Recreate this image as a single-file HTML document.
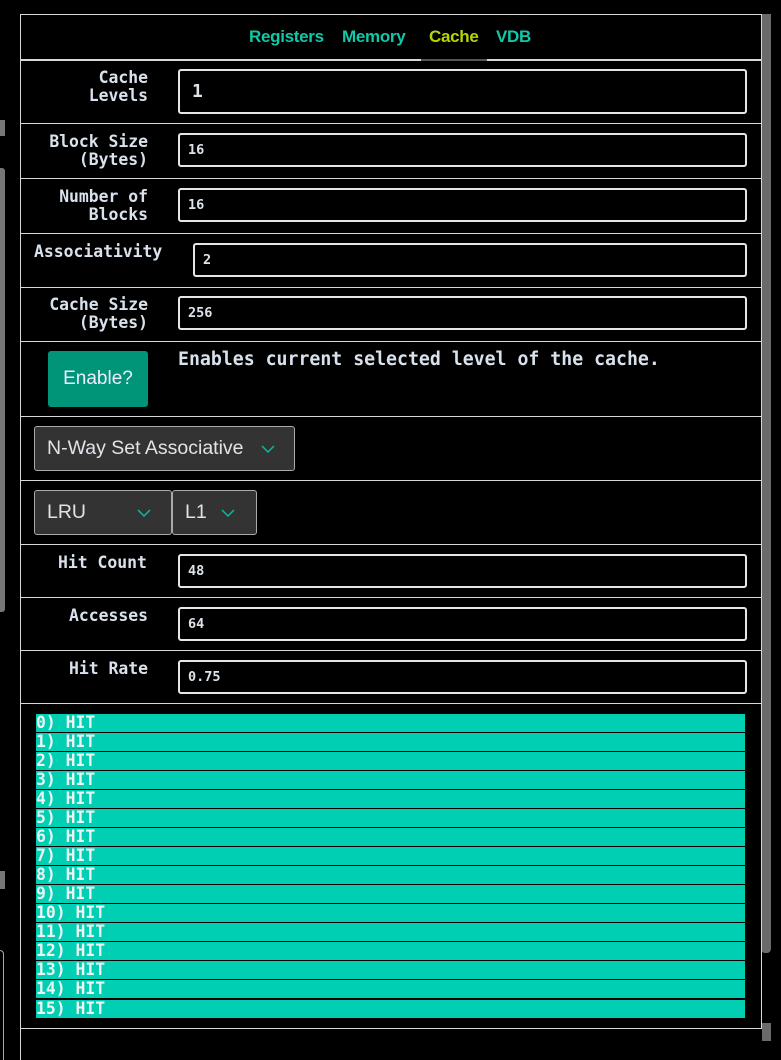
<!DOCTYPE html>
<html style="overflow:hidden"><head><meta charset="utf-8"><style>
*{box-sizing:border-box;margin:0;padding:0}
html,body{width:781px;height:1060px;overflow:hidden}
body{background:#000;position:relative;font-family:"DejaVu Sans Mono","Liberation Mono",monospace;color:#dde3ea}
.a{position:absolute}
.hl{position:absolute;left:21px;width:740px;height:1px;background:#d8d8d8}
.lab{position:absolute;font-weight:bold;font-size:16.4px;line-height:18px;text-align:right;color:#d9e2ec;white-space:nowrap}
.inp{position:absolute;left:178px;width:569px;border:2px solid #e6e6e6;border-radius:3px;font-weight:bold;font-size:13.5px;padding-left:8px;display:flex;align-items:center;color:#dde3ea}
.sel{position:absolute;background:#333;border:1px solid #aaa;border-radius:3px;font-family:"Liberation Sans","DejaVu Sans",sans-serif;font-size:19.5px;color:#e0e4e8;padding-left:12px;display:flex;align-items:center}
.sel svg{position:absolute}
.hit{position:absolute;left:36px;width:709px;height:18px;background:#00cfb4;font-weight:bold;font-size:16.4px;line-height:18px;color:#eef4f2;white-space:nowrap;overflow:hidden}
.tab{position:absolute;top:27px;font-family:"Liberation Sans","DejaVu Sans",sans-serif;font-weight:bold;font-size:17px;letter-spacing:-0.3px;color:#10c8a8}
</style></head><body>
<div class="a" style="left:0;top:120px;width:5px;height:16px;background:#777"></div>
<div class="a" style="left:0;top:168px;width:5px;height:444px;background:#777;border-radius:0 3px 3px 0"></div>
<div class="a" style="left:0;top:871px;width:5px;height:18px;background:#777"></div>
<div class="a" style="left:-6px;top:950px;width:10px;height:120px;border:1px solid #aaa;border-radius:4px"></div>
<div class="a" style="left:761px;top:14px;width:10px;height:939px;background:#6a6a6a;border-radius:0 0 4px 4px"></div>
<div class="a" style="left:761px;top:1023px;width:10px;height:18px;background:#6a6a6a"></div>
<div class="a" style="left:20px;top:14px;width:742px;height:1029px;border:1px solid #d8d8d8;border-bottom:none"></div>
<div class="a" style="left:20px;top:1028px;width:742px;height:32px;background:#000;border-top:1px solid #d8d8d8;border-left:1px solid #d8d8d8"></div>
<div class="tab" style="left:249px">Registers</div>
<div class="tab" style="left:342px">Memory</div>
<div class="tab" style="left:429px;color:#b8d400">Cache</div>
<div class="tab" style="left:496px">VDB</div>
<div class="hl" style="top:59px;height:2px"></div>
<div class="a" style="left:421px;top:59px;width:66px;height:2px;background:#555"></div>

<div class="lab" style="left:40px;width:108px;top:69px">Cache<br>Levels</div>
<div class="inp" style="top:69px;height:45px;font-size:18px;padding-left:12px">1</div>
<div class="hl" style="top:123px"></div>
<div class="lab" style="left:20px;width:128px;top:133px">Block Size<br>(Bytes)</div>
<div class="inp" style="top:133px;height:34px">16</div>
<div class="hl" style="top:178px"></div>
<div class="lab" style="left:20px;width:128px;top:188px">Number of<br>Blocks</div>
<div class="inp" style="top:188px;height:34px">16</div>
<div class="hl" style="top:233px"></div>
<div class="lab" style="left:34px;top:243px;text-align:left">Associativity</div>
<div class="inp" style="top:243px;height:34px;left:193px;width:554px">2</div>
<div class="hl" style="top:287px"></div>
<div class="lab" style="left:20px;width:128px;top:296px">Cache Size<br>(Bytes)</div>
<div class="inp" style="top:296px;height:34px">256</div>
<div class="hl" style="top:341px"></div>
<div class="a" style="left:48px;top:351px;width:100px;height:56px;background:#009479;border-radius:3px;font-family:'Liberation Sans','DejaVu Sans',sans-serif;font-size:19px;color:#eef;display:flex;align-items:center;justify-content:center">Enable?</div>
<div class="a" style="left:178px;top:349px;font-weight:bold;font-size:18.2px;color:#d9e2ec;white-space:nowrap">Enables current selected level of the cache.</div>
<div class="hl" style="top:416px"></div>
<div class="sel" style="left:34px;top:426px;width:261px;height:45px">N-Way Set Associative<svg style="left:226px;top:18px" width="14" height="9"><path d="M1 1L7 7L13 1" stroke="#10b8a0" stroke-width="1.5" fill="none"/></svg></div>
<div class="hl" style="top:480px"></div>
<div class="sel" style="left:34px;top:490px;width:138px;height:45px">LRU<svg style="left:102px;top:18px" width="14" height="9"><path d="M1 1L7 7L13 1" stroke="#10b8a0" stroke-width="1.5" fill="none"/></svg></div>
<div class="sel" style="left:172px;top:490px;width:85px;height:45px">L1<svg style="left:48px;top:18px" width="14" height="9"><path d="M1 1L7 7L13 1" stroke="#10b8a0" stroke-width="1.5" fill="none"/></svg></div>
<div class="hl" style="top:544px"></div>
<div class="lab" style="left:58px;top:554px;text-align:left">Hit Count</div>
<div class="inp" style="top:554px;height:34px">48</div>
<div class="hl" style="top:597px"></div>
<div class="lab" style="left:69px;top:607px;text-align:left">Accesses</div>
<div class="inp" style="top:607px;height:34px">64</div>
<div class="hl" style="top:650px"></div>
<div class="lab" style="left:69px;top:660px;text-align:left">Hit Rate</div>
<div class="inp" style="top:660px;height:34px">0.75</div>
<div class="hl" style="top:703px"></div>

<div class="hit" style="top:714px">0) HIT</div>
<div class="hit" style="top:733px">1) HIT</div>
<div class="hit" style="top:752px">2) HIT</div>
<div class="hit" style="top:771px">3) HIT</div>
<div class="hit" style="top:790px">4) HIT</div>
<div class="hit" style="top:809px">5) HIT</div>
<div class="hit" style="top:828px">6) HIT</div>
<div class="hit" style="top:847px">7) HIT</div>
<div class="hit" style="top:866px">8) HIT</div>
<div class="hit" style="top:885px">9) HIT</div>
<div class="hit" style="top:904px">10) HIT</div>
<div class="hit" style="top:923px">11) HIT</div>
<div class="hit" style="top:942px">12) HIT</div>
<div class="hit" style="top:961px">13) HIT</div>
<div class="hit" style="top:980px">14) HIT</div>
<div class="hit" style="top:1000px">15) HIT</div>
</body></html>
